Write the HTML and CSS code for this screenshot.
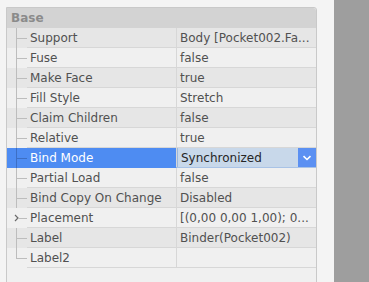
FILE: index.html
```html
<!DOCTYPE html>
<html lang="en">
<head>
  <meta charset="UTF-8">
  <title>Property View</title>
  <link rel="stylesheet" href="styles.css">
</head>
<body>
  <div class="page">
    <div class="panel">
      <div class="group">Base</div>
      <div class="row odd"><div class="tree"></div><div class="name">Support</div><div class="value">Body [Pocket002.Fa...</div></div>
      <div class="row"><div class="tree"></div><div class="name">Fuse</div><div class="value">false</div></div>
      <div class="row odd"><div class="tree"></div><div class="name">Make Face</div><div class="value">true</div></div>
      <div class="row"><div class="tree"></div><div class="name">Fill Style</div><div class="value">Stretch</div></div>
      <div class="row odd"><div class="tree"></div><div class="name">Claim Children</div><div class="value">false</div></div>
      <div class="row"><div class="tree"></div><div class="name">Relative</div><div class="value">true</div></div>
      <div class="row selected">
        <div class="tree"></div>
        <div class="name">Bind Mode</div>
        <div class="value combo">
          <span class="combo-text">Synchronized</span>
          <span class="combo-btn">
            <svg width="10" height="6" viewBox="0 0 10 6"><path d="M1.5 1.2 L5 4.5 L8.5 1.2" fill="none" stroke="#fff" stroke-width="1.6"/></svg>
          </span>
        </div>
      </div>
      <div class="row"><div class="tree"></div><div class="name">Partial Load</div><div class="value">false</div></div>
      <div class="row odd"><div class="tree"></div><div class="name">Bind Copy On Change</div><div class="value">Disabled</div></div>
      <div class="row">
        <div class="tree expand">
          <svg class="arrow" width="5" height="8" viewBox="0 0 5 8"><path d="M1 1 L4 4 L1 7" fill="none" stroke="#6a6a6a" stroke-width="1.2"/></svg>
        </div>
        <div class="name">Placement</div>
        <div class="value">[(0,00 0,00 1,00); 0...</div>
      </div>
      <div class="row odd"><div class="tree"></div><div class="name">Label</div><div class="value">Binder(Pocket002)</div></div>
      <div class="row last"><div class="tree"></div><div class="name">Label2</div><div class="value"></div></div>
    </div>
    <div class="side"></div>
  </div>
</body>
</html>
```

FILE: styles.css
```css
body {
  margin: 0;
  background-color: #f4f4f4;
  font-family: "DejaVu Sans", sans-serif;
  font-size: 12px;
  color: #515151;
}
.page {
  display: flex;
  height: 282px;
  overflow: hidden;
}
.panel {
  margin: 7px 0 0 6px;
  width: 309px;
  height: 300px;
  border: 1px solid #c9c9c9;
  border-top-right-radius: 3px;
  background-color: #f0f0f0;
}
.side {
  margin-left: 17px;
  flex: 1;
  background-color: #9e9e9e;
}
.group {
  height: 20px;
  line-height: 20px;
  padding-left: 4px;
  background-color: #d3d3d3;
  color: #8b8b8b;
  font-weight: bold;
  border-top-right-radius: 3px;
}
.row {
  display: grid;
  grid-template-columns: 20px 150px 1fr;
  height: 20px;
  background-color: #f0f0f0;
}
.row.odd {
  background-color: #e6e6e6;
}
.tree {
  position: relative;
}
.tree::before {
  content: "";
  position: absolute;
  left: 9px;
  top: 0;
  bottom: 0;
  border-left: 1px solid #bdbdbd;
}
.tree::after {
  content: "";
  position: absolute;
  left: 10px;
  right: 0;
  top: 10px;
  border-top: 1px solid #bdbdbd;
}
.row.last .tree::before {
  bottom: 9px;
}
.tree.expand::before {
  display: none;
}
.tree.expand::after {
  left: 12px;
}
.tree .arrow {
  position: absolute;
  left: 7px;
  top: 6px;
}
.name, .value {
  box-sizing: border-box;
  height: 20px;
  line-height: 20px;
  border-bottom: 1px solid #d7d7d7;
  white-space: nowrap;
}
.name {
  padding-left: 3px;
  border-right: 1px solid #d7d7d7;
}
.value {
  padding-left: 3px;
}
.row.selected .tree,
.row.selected .name {
  background-color: #4e8cf2;
  color: #fff;
  border-bottom-color: #4e8cf2;
}
.row.selected .tree::before,
.row.selected .tree::after {
  border-color: #3d6fc4;
}
.combo {
  display: flex;
  padding-left: 0;
  border-bottom: 1px solid #a9c3e6;
}
.combo-text {
  flex: 1;
  padding-left: 3px;
  background-color: #c8d8ea;
  color: #262626;
  border-left: 1px solid #9bb7de;
}
.combo-btn {
  width: 18px;
  display: flex;
  align-items: center;
  justify-content: center;
  background-color: #5b90f2;
}
```
